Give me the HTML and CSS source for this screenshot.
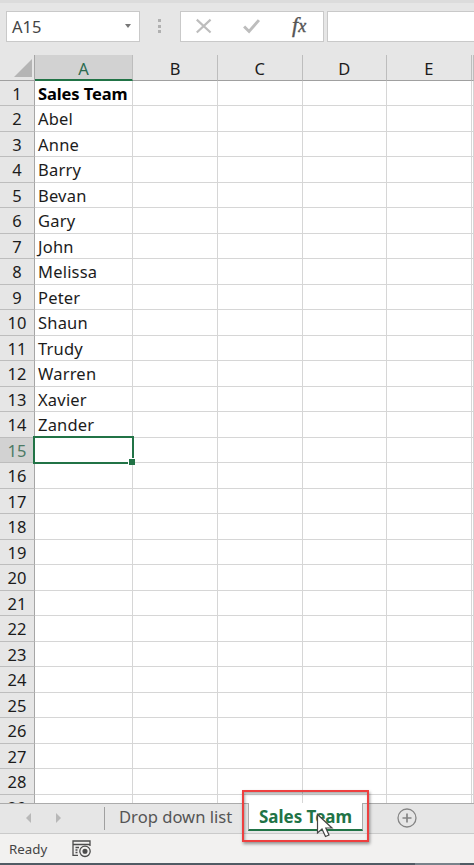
FILE: index.html
```html
<!DOCTYPE html>
<html lang="en">
<head>
<meta charset="utf-8">
<title>Sales Team</title>
<link rel="stylesheet" href="styles.css">
</head>
<body>
<div class="app">
  <div class="formula-bar">
    <div class="name-box"><span>A15</span><i class="caret"></i></div>
    <div class="dots"><i></i><i></i><i></i></div>
    <div class="fx-box">
      <svg width="144" height="30" viewBox="0 0 144 30" fill="none">
        <path d="M16 7.500L30 20.500M30 7.500L16 20.500" stroke="#bdbdbd" stroke-width="2.200"/>
        <path d="M64 14.500L69 19.500L79 8" stroke="#bdbdbd" stroke-width="3"/>
      </svg>
      <span class="fx">f<small>x</small></span>
    </div>
    <div class="input-box"></div>
  </div>
  <div class="sheet">
    <div class="row head">
      <div class="num"><i class="corner"></i></div>
      <div class="cell active">A</div><div class="cell">B</div><div class="cell">C</div><div class="cell">D</div><div class="cell">E</div><div class="cell"></div>
    </div>
    <div id="rows"></div>
  </div>
  <div class="tabs">
    <i class="arrow left"></i><i class="arrow right"></i><i class="divider"></i>
    <span class="tab">Drop down list</span>
    <div class="tab current"><span>Sales Team</span><i class="callout"></i>
      <svg class="pointer" width="20" height="26" viewBox="0 0 20 26"><path d="M1.500 1.500V20L6 16L9.500 23.500L13 22L9.800 15H16Z" fill="#fff" stroke="#444" stroke-width="1.200"/></svg>
    </div>
    <svg class="add" width="20" height="20" viewBox="0 0 20 20" fill="none" stroke="#858585"><circle cx="10" cy="10" r="9" stroke-width="1.300"/><path d="M5.500 10H14.500M10 5.500V14.500" stroke-width="1.700"/></svg>
  </div>
  <div class="status">
    <span>Ready</span>
    <svg width="20" height="18" viewBox="0 0 20 18" fill="none" stroke="#4c4c4c" stroke-width="1.300"><path d="M6 15.300H1V1H18V6M1 4.500H18M3.500 7.500H7M3.500 10H5.500M3.500 12.500H5.500"/><circle cx="13" cy="11.300" r="5.200"/><circle cx="13" cy="11.300" r="1.900" fill="#4c4c4c"/></svg>
  </div>
  <div class="edge"><i></i></div>
</div>
<script src="script.js"></script>
</body>
</html>
```
FILE: styles.css
```css
* { box-sizing: border-box; }
body { margin: 0; }
.app { width: 474px; height: 865px; overflow: hidden; display: flex; flex-direction: column; background: #e6e6e6; font-family: "Noto Sans", sans-serif; color: #1c1c1c; }
.formula-bar { height: 55px; flex: none; display: flex; padding: 8px 0 0 6px; border-top: 3px solid #dcdcdc; }
.name-box, .fx-box, .input-box { height: 31px; background: #fff; border: 1px solid #c9c9c9; }
.name-box { width: 134px; display: flex; align-items: center; justify-content: space-between; padding: 0 8px 0 5px; font-size: 16.500px; color: #444; }
.caret { border: 3.500px solid transparent; border-top: 4px solid #777; border-bottom: 0; margin-top: -2px; }
.dots { width: 40px; display: flex; flex-direction: column; align-items: center; gap: 2.500px; padding: 8px 2px 0 0; }
.dots i { width: 3px; height: 3px; background: #b0b0b0; }
.fx-box { width: 144px; display: flex; position: relative; }
.fx { position: absolute; left: 111px; top: -1px; font: italic 22px/28px "Liberation Serif", serif; color: #555; -webkit-text-stroke: 0.4px #555; }
.fx small { font-size: 18px; }
.input-box { flex: 1; margin-left: 3px; border-right: 0; }
.sheet { height: 748px; flex: none; overflow: hidden; background: #fff; }
.row { display: grid; grid-template-columns: 35px 98px 85px 84.500px 84.500px 84.500px 1fr; grid-template-rows: 100%; height: 25.530px; font-size: 16.500px; line-height: 26px; }
.row > * { border-right: 1px solid #d6d6d6; border-bottom: 1px solid #d6d6d6; white-space: nowrap; }
.row .num { background: #e6e6e6; border-right-color: #a6a6a6; border-bottom-color: #bdbdbd; text-align: center; }
.row .name { padding-left: 3px; letter-spacing: 0.2px; }
.row .bold { font-weight: 700; letter-spacing: -0.1px; color: #000; }
.head { height: 25.500px; }
.head > .cell { background: #e6e6e6; text-align: center; line-height: 28px; border-right-color: #bdbdbd; border-bottom-color: #a0a0a0; }
.head > .active { background: #d2d2d2; color: #2c6b50; border-bottom: 2px solid #217346; }
.head > .num { display: flex; justify-content: flex-end; padding: 4px 2px 0 0; border-bottom-color: #a0a0a0; }
.corner { width: 18px; height: 18px; background: #b5b5b5; clip-path: polygon(100% 0, 100% 100%, 0 100%); }
.selected .num { background: #d2d2d2; color: #4d7a65; }
.selected .name { position: relative; }
.outline { position: absolute; left: -2px; top: -2px; right: -2px; bottom: -2px; border: 2px solid #217346; }
.outline::after { content: ""; position: absolute; right: -3px; bottom: -3px; width: 6px; height: 6px; background: #217346; border: solid #fff; border-width: 1px 0 0 1px; }
.tabs { height: 31px; flex: none; display: flex; border-top: 1px solid #ababab; border-bottom: 1px solid #cacaca; }
.arrow { border: 5px solid transparent; margin-top: 9px; height: 10px; }
.left { border-left: 0; border-right-color: #b8b8b8; margin-left: 26px; }
.right { border-right: 0; border-left-color: #b8b8b8; margin-left: 25px; }
.divider { width: 1px; height: 23px; background: #a0a0a0; margin: 3px 0 0 43px; }
.tab { font-size: 16.600px; line-height: 26px; color: #555; margin-left: 14px; width: 114px; white-space: nowrap; }
.current { position: relative; margin: -1px 0 0 15px; width: 115px; height: 28px; line-height: 28px; background: #fff; border: 1px solid #aaa; border-top: 0; border-bottom: 2px solid #217346; color: #217346; font-weight: 700; text-align: center; font-size: 17px; }
.callout { position: absolute; left: -7px; top: -13px; width: 127px; height: 52px; border: 2px solid #ee3f3f; box-shadow: 1px 2px 3px #0006, inset 1px 2px 3px #0005; }
.pointer { position: absolute; left: 67px; top: 10px; }
.add { margin: 4px 0 0 34px; }
.status { height: 29px; flex: none; background: #f2f1f0; display: flex; align-items: center; padding: 1px 0 0 9px; font-size: 13.300px; color: #444; }
.status svg { margin-left: 25px; }
.edge { height: 2px; background: #505b64; display: flex; }
.edge i { width: 45px; margin-left: 415px; background: #78828a; }
```
FILE: script.js
```js
const names = ["Sales Team", "Abel", "Anne", "Barry", "Bevan", "Gary", "John", "Melissa", "Peter", "Shaun", "Trudy", "Warren", "Xavier", "Zander"];
const rows = document.getElementById("rows");
for (let n = 1; n <= 29; n++) {
  const row = document.createElement("div");
  row.className = n === 15 ? "row selected" : "row";
  const content = n === 15 ? '<i class="outline"></i>' : names[n - 1] || "";
  row.innerHTML = `<div class="num">${n}</div><div class="name${n === 1 ? " bold" : ""}">${content}</div>` + "<div></div>".repeat(5);
  rows.append(row);
}
```
